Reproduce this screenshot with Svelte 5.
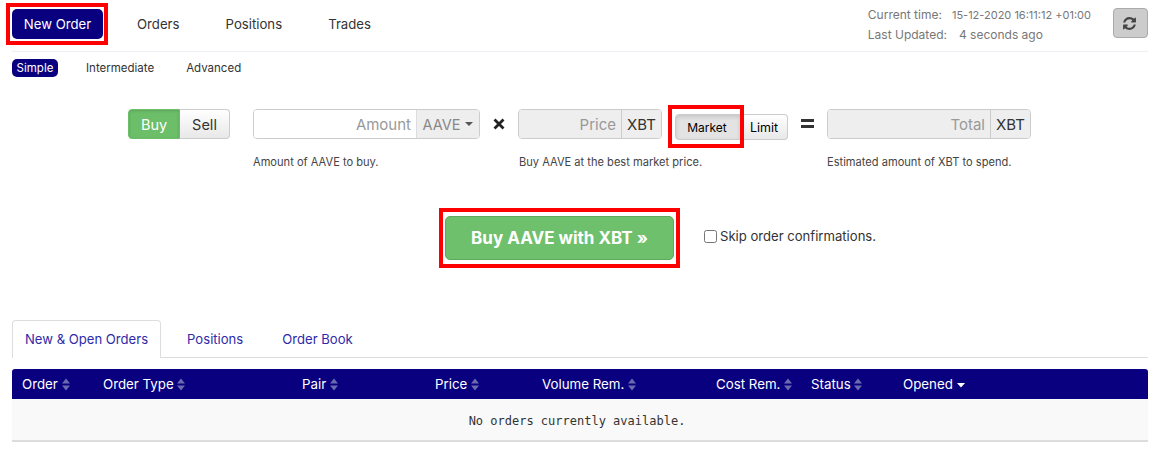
<script>
  const columns = [
    { label: 'Order', width: 81 },
    { label: 'Order Type', width: 199 },
    { label: 'Pair', width: 133 },
    { label: 'Price', width: 107 },
    { label: 'Volume Rem.', width: 174 },
    { label: 'Cost Rem.', width: 95 },
    { label: 'Status', width: 92 },
    { label: 'Opened', width: 255, sorted: true }
  ];
  const refreshPath = 'M1639 1056q0 5-1 7-64 268-268 434.5t-478 166.5q-146 0-282.5-55t-243.5-157l-129 129q-19 19-45 19t-45-19-19-45v-448q0-26 19-45t45-19h448q26 0 45 19t19 45-19 45l-137 137q71 66 161 102t187 36q134 0 250-65t186-179q11-17 53-117 8-23 30-23h192q13 0 22.5 9.5t9.5 22.5zm25-800v448q0 26-19 45t-45 19h-448q-26 0-45-19t-19-45 19-45l138-138q-148-137-349-137-134 0-250 65t-186 179q-11 17-53 117-8 23-30 23h-199q-13 0-22.5-9.5t-9.5-22.5v-7q65-268 270-434.5t480-166.5q146 0 284 55.5t245 156.5l130-129q19-19 45-19t45 19 19 45z';
</script>

<div class="page">
  <!-- top nav -->
  <header class="topbar">
    <nav class="mainnav">
      <span class="marked nav-wrap">
        <button type="button" class="nav-btn active">New Order</button>
      </span>
      <button type="button" class="nav-btn">Orders</button>
      <button type="button" class="nav-btn">Positions</button>
      <button type="button" class="nav-btn">Trades</button>
    </nav>
    <div class="status">
      <div class="times">
        <div class="time-row"><span class="time-label">Current time:</span><span class="time-now">15-12-2020 16:11:12 +01:00</span></div>
        <div class="time-row"><span class="time-label wide">Last Updated:</span><span class="time-ago">4 seconds ago</span></div>
      </div>
      <button type="button" class="refresh" aria-label="Refresh">
        <svg viewBox="0 0 1792 1792" width="15" height="15"><path d={refreshPath} fill="#444" /></svg>
      </button>
    </div>
  </header>

  <!-- order mode -->
  <div class="subnav">
    <span class="sub active">Simple</span>
    <span class="sub">Intermediate</span>
    <span class="sub">Advanced</span>
  </div>

  <!-- order form -->
  <div class="form-row">
    <div class="btn-group side">
      <button type="button" class="seg buy">Buy</button>
      <button type="button" class="seg sell">Sell</button>
    </div>

    <div class="field amount">
      <div class="input-group">
        <span class="input"><span class="ph">Amount</span></span>
        <span class="addon muted">AAVE <i class="caret"></i></span>
      </div>
      <p class="help">Amount of AAVE to buy.</p>
    </div>

    <svg class="times-icon" viewBox="0 0 12 12" width="12" height="12" aria-hidden="true">
      <path d="M1.5 1.5l9 9M10.5 1.5l-9 9" stroke="#222" stroke-width="2.8" fill="none" />
    </svg>

    <div class="field price">
      <div class="input-group">
        <span class="input disabled"><span class="ph">Price</span></span>
        <span class="addon">XBT</span>
      </div>
      <p class="help indent">Buy AAVE at the best market price.</p>
    </div>

    <div class="btn-group kind">
      <button type="button" class="seg small market">Market</button>
      <button type="button" class="seg small limit">Limit</button>
      <span class="mark mark-market"></span>
    </div>

    <div class="equals" aria-hidden="true"><i></i><i></i></div>

    <div class="field total">
      <div class="input-group">
        <span class="input disabled"><span class="ph">Total</span></span>
        <span class="addon">XBT</span>
      </div>
      <p class="help">Estimated amount of XBT to spend.</p>
    </div>
  </div>

  <!-- submit -->
  <div class="submit-row">
    <span class="marked submit-wrap">
      <button type="button" class="submit">Buy AAVE with XBT »</button>
    </span>
    <label class="skip"><input type="checkbox" />Skip order confirmations.</label>
  </div>

  <!-- tabs and table -->
  <ul class="tabs">
    <li class="tab active">New &amp; Open Orders</li>
    <li class="tab">Positions</li>
    <li class="tab">Order Book</li>
  </ul>

  <table class="orders-table">
    <colgroup>
      {#each columns as col}
        <col style="width: {col.width}px" />
      {/each}
    </colgroup>
    <thead>
      <tr>
        {#each columns as col}
          <th>
            {col.label}
            {#if col.sorted}
              <svg class="sort" viewBox="0 0 8 13" width="8" height="13"><path d="M0 5h8l-4 4.5z" fill="#fff" /></svg>
            {:else}
              <svg class="sort" viewBox="0 0 8 13" width="8" height="13"><path d="M0 5.6L4 .5l4 5.1zM0 7.4h8l-4 5.1z" fill="#6a6ab0" /></svg>
            {/if}
          </th>
        {/each}
      </tr>
    </thead>
    <tbody>
      <tr>
        <td colspan="8">No orders currently available.</td>
      </tr>
    </tbody>
  </table>
</div>

<style>
  :global(body) {
    margin: 0;
    background: #fff;
  }

  .page {
    width: 1165px;
    height: 472px;
    box-sizing: border-box;
    padding: 0 17px 0 12px;
    font-family: Inter, "Liberation Sans", sans-serif;
    font-size: 14px;
    color: #333;
    overflow: hidden;
  }

  button {
    font-family: inherit;
  }

  .topbar {
    display: flex;
    justify-content: space-between;
    height: 52px;
    box-sizing: border-box;
    border-bottom: 1px solid #eeeef5;
  }

  .mainnav {
    display: flex;
    align-items: flex-start;
    padding-top: 9px;
  }

  .nav-btn {
    height: 30px;
    padding: 0;
    border: 0;
    background: none;
    font-size: 13.2px;
    color: #333;
    margin-right: 46px;
  }

  .nav-btn.active {
    display: block;
    width: 91px;
    margin: 0;
    background: #090080;
    color: #fff;
    border-radius: 5px;
  }

  .marked {
    position: relative;
    display: inline-block;
  }

  .marked::after,
  .mark {
    content: '';
    position: absolute;
    border: 4px solid #f00;
    box-sizing: border-box;
    pointer-events: none;
  }

  .nav-wrap {
    margin-right: 34px;
  }

  .nav-wrap::after {
    left: -6px;
    right: -5px;
    top: -6px;
    bottom: -6px;
  }

  .status {
    display: flex;
    align-items: flex-start;
    gap: 22px;
    color: #777;
    font-size: 12px;
  }

  .times {
    padding-top: 5px;
  }

  .time-row {
    height: 20px;
    line-height: 19px;
    white-space: nowrap;
  }

  .time-label {
    margin-right: 10px;
  }

  .time-label.wide {
    margin-right: 12px;
  }

  .time-now {
    font-size: 11px;
  }

  .refresh {
    display: flex;
    align-items: center;
    justify-content: center;
    width: 35px;
    height: 30px;
    margin-top: 8px;
    padding: 0 2px 0 0;
    background: #ccc;
    border: 1px solid #aaa;
    border-radius: 4px;
  }

  .subnav {
    display: flex;
    align-items: center;
    height: 18px;
    margin-top: 7px;
    font-size: 11.5px;
  }

  .sub {
    line-height: 18px;
    margin-right: 32px;
  }

  .sub.active {
    width: 46px;
    margin-right: 28px;
    text-align: center;
    font-size: 11.5px;
    background: #090080;
    color: #fff;
    border-radius: 5px;
  }

  .form-row {
    display: flex;
    align-items: flex-start;
    height: 139px;
    padding: 32px 0 0 116px;
    box-sizing: border-box;
  }

  .btn-group {
    display: flex;
    position: relative;
  }

  .seg {
    padding: 0;
    border: 1px solid #ccc;
    font-size: 14.5px;
    height: 30px;
  }

  .buy {
    width: 52px;
    background: #6cbe69;
    color: #fff;
    border-color: #6cbe69;
    border-radius: 4px 0 0 4px;
    box-shadow: inset 0 1px 3px rgba(0, 0, 0, 0.15);
  }

  .sell {
    width: 50px;
    border-left: 0;
    background: linear-gradient(#fff, #e8e8e8);
    border-radius: 0 4px 4px 0;
    color: #333;
  }

  .side {
    margin-right: 23px;
  }

  .field {
    display: flex;
    flex-direction: column;
    white-space: nowrap;
  }

  .amount {
    width: 227px;
  }

  .price {
    width: 144px;
    margin-right: 13px;
  }

  .total {
    width: 204px;
  }

  .input-group {
    display: flex;
    height: 30px;
    box-sizing: border-box;
    border: 1px solid #ccc;
    border-radius: 4px;
    font-size: 15px;
  }

  .input {
    flex: 1;
    display: flex;
    align-items: center;
    justify-content: flex-end;
    padding-right: 5px;
    background: #fff;
    border-radius: 3px 0 0 3px;
  }

  .input.disabled {
    background: #eee;
  }

  .ph {
    color: #999;
  }

  .addon {
    display: flex;
    align-items: center;
    justify-content: center;
    gap: 5px;
    width: 40px;
    box-sizing: border-box;
    background: #eee;
    border-left: 1px solid #ccc;
    border-radius: 0 3px 3px 0;
    color: #333;
  }

  .addon.muted {
    width: 63px;
    font-size: 14.5px;
    color: #888;
    border-left-color: #ddd;
  }

  .caret {
    width: 0;
    height: 0;
    border: 4px solid transparent;
    border-top-color: #555;
    border-bottom: 0;
  }

  .help {
    margin: 16px 0 0;
    font-size: 11.1px;
    line-height: 14px;
    color: #444;
  }

  .help.indent {
    padding-left: 1px;
  }

  .times-icon {
    margin: 9px 13px 0;
  }

  .kind {
    margin-top: 5px;
  }

  .small {
    height: 26px;
    font-size: 12px;
  }

  .market {
    width: 66px;
    padding-right: 2px;
    background: #e3e3e3;
    border-radius: 4px 0 0 4px;
    box-shadow: inset 0 2px 4px rgba(0, 0, 0, 0.13);
  }

  .limit {
    width: 47px;
    border-left: 0;
    font-size: 12.5px;
    background: linear-gradient(#fff, #e8e8e8);
    border-radius: 0 4px 4px 0;
  }

  .mark-market {
    left: -7px;
    top: -9px;
    width: 76px;
    height: 43px;
  }

  .equals {
    display: flex;
    flex-direction: column;
    gap: 3px;
    width: 13px;
    margin: 10px 13px 0;
  }

  .equals i {
    display: block;
    height: 3px;
    background: #333;
  }

  .submit-row {
    display: flex;
    align-items: flex-start;
    height: 104px;
    padding: 0 0 0 433px;
    box-sizing: border-box;
  }

  .submit-wrap {
    margin: 0 30px 0 0;
  }

  .submit-wrap::after {
    inset: -8px -6px;
  }

  .submit {
    display: block;
    width: 229px;
    height: 44px;
    padding: 0;
    background: #6fc06d;
    border: 1px solid #5fa85d;
    border-radius: 5px;
    color: #fff;
    font-size: 17px;
    font-weight: 700;
  }

  .skip {
    display: flex;
    align-items: center;
    margin-top: 12px;
    gap: 3px;
    font-size: 13.1px;
  }

  .skip input {
    width: 13px;
    height: 13px;
    margin: 0;
  }

  .tabs {
    display: flex;
    list-style: none;
    margin: 0;
    padding: 0;
    height: 38px;
    box-sizing: border-box;
    border-bottom: 1px solid #ddd;
  }

  .tab {
    height: 37px;
    line-height: 37px;
    padding: 0 12px;
    margin-right: 13px;
    color: #2f2aa8;
    font-size: 13.1px;
    border: 1px solid transparent;
    border-bottom: 0;
  }

  .tab.active {
    background: #fff;
    border-color: #ddd;
    border-radius: 4px 4px 0 0;
    margin-bottom: -1px;
  }

  .orders-table {
    width: 1136px;
    margin-top: 11px;
    table-layout: fixed;
    border-collapse: collapse;
  }

  th {
    height: 30px;
    padding: 0 0 0 10px;
    background: #090080;
    color: #fff;
    font-size: 13.3px;
    font-weight: 400;
    text-align: left;
  }

  th:first-child {
    border-radius: 3px 0 0 0;
  }

  th:last-child {
    border-radius: 0 3px 0 0;
  }

  .sort {
    vertical-align: -2px;
  }

  td {
    height: 39px;
    padding: 2px 6px 0 0;
    background: #f9f9f9;
    border-bottom: 2px solid #ddd;
    text-align: center;
    font-family: "DejaVu Sans Mono", monospace;
    font-size: 12px;
    color: #333;
  }
</style>
